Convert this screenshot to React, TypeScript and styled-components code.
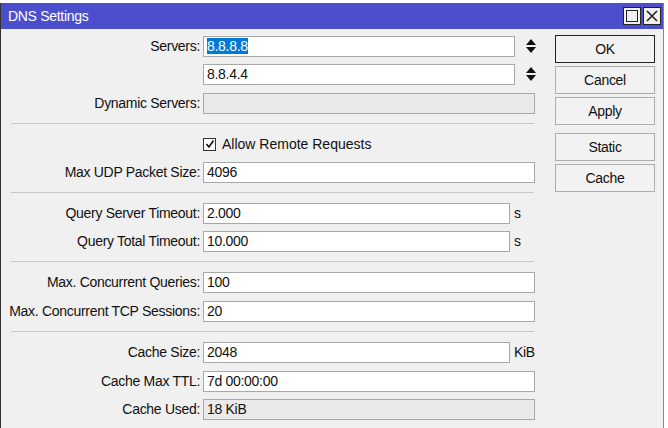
import React from "react";
import styled, { createGlobalStyle } from "styled-components";

const Global = createGlobalStyle`
  html, body { margin: 0; padding: 0; background: #fff; }
  body { font-family: "Liberation Sans", Arial, sans-serif; font-size: 14px; color: #111; }
`;

const Win = styled.div`
  width: 662px; height: 425px; margin-top: 3px;
  border-left: 1px solid #333; border-right: 1px solid #888;
  background: #f0f0f0; display: flex; flex-direction: column; overflow: hidden;
`;
const TitleBar = styled.div`
  height: 26px; background: #4c4fcb; color: #fff; display: flex; align-items: center;
  padding: 0 2px 0 7px; font-size: 14px; letter-spacing: -0.3px;
`;
const TitleText = styled.div` flex: 1; `;
const TBtn = styled.div`
  width: 16px; height: 16px; border: 1px solid #222; background: #f0f0f0; margin-left: 2px;
  display: flex; align-items: center; justify-content: center;
`;
const Body = styled.div` display: flex; padding: 6px 0 0 0; gap: 19px; `;
const Form = styled.div` width: 535px; display: flex; flex-direction: column; `;
const Row = styled.div<{ $mb?: number; $mt?: number; $h?: number }>`
  display: grid; grid-template-columns: 202px 1fr; align-items: center; height: ${p => p.$h ?? 22}px;
  margin-bottom: ${p => p.$mb ?? 7}px; margin-top: ${p => p.$mt ?? 0}px;
`;
const Label = styled.div` text-align: right; padding-right: 3px; white-space: nowrap; letter-spacing: -0.3px; `;
const FieldWrap = styled.div` display: flex; align-items: center; `;
const Input = styled.div<{ $w?: number; $ro?: boolean }>`
  height: 21px; box-sizing: border-box; width: ${p => p.$w ?? 332}px;
  border: 1px solid #a8a8a8; background: ${p => (p.$ro ? "#eaeaea" : "#fff")};
  padding: 0 3px; display: flex; align-items: center; letter-spacing: -0.3px;
`;
const Sel = styled.span` background: #0078d7; color: #fff; `;
const Unit = styled.span` margin-left: 4px; letter-spacing: -0.3px; `;
const Arrows = styled.div` margin-left: 11px; display: flex; `;
const Sep = styled.div<{ $m: string }>` height: 1px; background: #c8c8c8; margin: ${p => p.$m}; width: 523px; `;
const Check = styled.div`
  width: 13px; height: 13px; border: 1px solid #333; background: #fff; box-sizing: border-box;
  display: flex; align-items: center; justify-content: center; margin-right: 6px;
`;
const Buttons = styled.div` display: flex; flex-direction: column; width: 100px; `;
const Btn = styled.div<{ $def?: boolean; $mb?: number }>`
  height: 28px; box-sizing: border-box; border: 1px solid ${p => (p.$def ? "#222" : "#adadad")};
  background: #f2f2f2; display: flex; align-items: center; justify-content: center;
  margin-bottom: ${p => p.$mb ?? 3}px; font-size: 14px; letter-spacing: -0.3px;
`;

const Spin = () => (
  <svg width="10" height="16" viewBox="0 0 10 16"><path d="M5 1 L10 7 L0 7Z M0 9 L10 9 L5 15Z" fill="#111" /></svg>
);

export default function App() {
  return (
    <>
      <Global />
      <Win>
        <TitleBar>
          <TitleText>DNS Settings</TitleText>
          <TBtn><svg width="12" height="12"><rect x="0.5" y="0.5" width="11" height="11" fill="none" stroke="#222" /></svg></TBtn>
          <TBtn><svg width="12" height="12"><path d="M1 1L11 11M11 1L1 11" stroke="#222" strokeWidth="1.6" /></svg></TBtn>
        </TitleBar>
        <Body>
          <Form>
            <Row $mb={6}><Label>Servers:</Label><FieldWrap><Input $w={312}><Sel>8.8.8.8</Sel></Input><Arrows><Spin /></Arrows></FieldWrap></Row>
            <Row $mb={7}><Label /><FieldWrap><Input $w={312}>8.8.4.4</Input><Arrows><Spin /></Arrows></FieldWrap></Row>
            <Row $mb={0}><Label>Dynamic Servers:</Label><Input $ro /></Row>
            <Sep $m="9px 0 9px 10px" />
            <Row $mb={0} $h={22}><Label /><FieldWrap><Check><svg width="10" height="10"><path d="M1.5 5 L4 8 L8.5 1.5" stroke="#111" strokeWidth="1.6" fill="none" /></svg></Check>Allow Remote Requests</FieldWrap></Row>
            <Row $mb={0} $mt={6}><Label>Max UDP Packet Size:</Label><Input>4096</Input></Row>
            <Sep $m="9px 0 9px 10px" />
            <Row $mb={6}><Label>Query Server Timeout:</Label><FieldWrap><Input $w={307}>2.000</Input><Unit>s</Unit></FieldWrap></Row>
            <Row $mb={0}><Label>Query Total Timeout:</Label><FieldWrap><Input $w={307}>10.000</Input><Unit>s</Unit></FieldWrap></Row>
            <Sep $m="9px 0 9px 10px" />
            <Row $mb={7}><Label>Max. Concurrent Queries:</Label><Input>100</Input></Row>
            <Row $mb={0}><Label>Max. Concurrent TCP Sessions:</Label><Input>20</Input></Row>
            <Sep $m="9px 0 9px 10px" />
            <Row $mb={7}><Label>Cache Size:</Label><FieldWrap><Input $w={307}>2048</Input><Unit>KiB</Unit></FieldWrap></Row>
            <Row $mb={6}><Label>Cache Max TTL:</Label><Input>7d 00:00:00</Input></Row>
            <Row $mb={0}><Label>Cache Used:</Label><Input $ro>18 KiB</Input></Row>
          </Form>
          <Buttons>
            <Btn $def>OK</Btn>
            <Btn>Cancel</Btn>
            <Btn $mb={8}>Apply</Btn>
            <Btn>Static</Btn>
            <Btn>Cache</Btn>
          </Buttons>
        </Body>
      </Win>
    </>
  );
}
